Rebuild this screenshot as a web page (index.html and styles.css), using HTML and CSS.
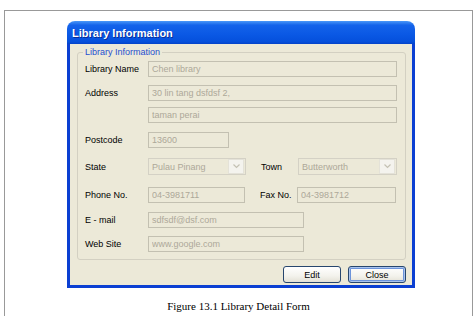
FILE: index.html
```html
<!DOCTYPE html>
<html lang="en">
  <head>
    <meta charset="UTF-8" />
    <title>Library Detail Form</title>
    <link rel="stylesheet" href="styles.css">
  </head>
  <body>
    <div class="figure">
      <div class="window">
        <div class="title-bar">Library Information</div>
        <div class="window-body">
          <fieldset class="group">
            <legend>Library Information</legend>

            <div class="form-row row-name">
              <label>Library Name</label>
              <input type="text" class="field w-full" value="Chen library" disabled />
            </div>

            <div class="form-row row-addr1">
              <label>Address</label>
              <input type="text" class="field w-full" value="30 lin tang dsfdsf 2," disabled />
            </div>

            <div class="form-row row-addr2">
              <label></label>
              <input type="text" class="field w-full" value="taman perai" disabled />
            </div>

            <div class="form-row row-post">
              <label>Postcode</label>
              <input type="text" class="field w-post" value="13600" disabled />
            </div>

            <div class="form-row row-state">
              <label>State</label>
              <div class="combo w-state">
                <span class="combo-text">Pulau Pinang</span>
                <span class="combo-btn">
                  <svg width="7" height="5" viewBox="0 0 7 5"><path d="M0.5 0.5 L3.5 3.5 L6.5 0.5" fill="none" stroke="#c4c1b3" stroke-width="1.2"/></svg>
                </span>
              </div>
              <label class="label-right">Town</label>
              <div class="combo w-right">
                <span class="combo-text">Butterworth</span>
                <span class="combo-btn">
                  <svg width="7" height="5" viewBox="0 0 7 5"><path d="M0.5 0.5 L3.5 3.5 L6.5 0.5" fill="none" stroke="#c4c1b3" stroke-width="1.2"/></svg>
                </span>
              </div>
            </div>

            <div class="form-row row-phone">
              <label>Phone No.</label>
              <input type="text" class="field w-phone" value="04-3981711" disabled />
              <label class="label-right">Fax No.</label>
              <input type="text" class="field w-right" value="04-3981712" disabled />
            </div>

            <div class="form-row row-mail">
              <label>E - mail</label>
              <input type="text" class="field w-mail" value="sdfsdf@dsf.com" disabled />
            </div>

            <div class="form-row row-web">
              <label>Web Site</label>
              <input type="text" class="field w-mail" value="www.google.com" disabled />
            </div>
          </fieldset>

          <div class="button-row">
            <button type="button">Edit</button>
            <button type="button" class="default">Close</button>
          </div>
        </div>
      </div>
      <p class="caption">Figure 13.1 Library Detail Form</p>
    </div>
  </body>
</html>
```

FILE: styles.css
```css
body {
  margin: 0;
  background: #fff;
  font-family: "Liberation Sans", Arial, sans-serif;
  font-size: 9px;
}
.figure {
  margin: 10px 1px 0 4px;
  height: 306px;
  box-sizing: border-box;
  border: 1px solid #999;
  border-bottom: none;
}
.window {
  width: 348px;
  margin: 10px 0 0 62px;
}
.title-bar {
  height: 23px;
  line-height: 24px;
  padding-left: 5px;
  border-radius: 8px 8px 0 0;
  background: linear-gradient(#4a98f8 0, #1463ea 18%, #0a58e4 60%, #0550dc 90%, #0342c8 100%);
  color: #fff;
  font-size: 11px;
  font-weight: bold;
  text-shadow: 1px 1px 0 #0a2f9a;
}
.window-body {
  height: 244px;
  box-sizing: border-box;
  padding: 3px 6px 3px 7px;
  background: #ece9d8;
  border: 3px solid #0b3fd2;
  border-top: none;
}
.group {
  margin: 0;
  padding: 4px 0 7px 7px;
  border: 1px solid #d3d0c2;
  border-radius: 3px;
  min-inline-size: 0;
}
.group legend {
  margin-left: -2px;
  padding: 0 2px;
  line-height: 10px;
  color: #1f4fd0;
}
.form-row {
  display: flex;
  align-items: center;
  height: 16px;
}
.form-row label {
  width: 63px;
  color: #000;
  flex-shrink: 0;
}
.form-row .label-right {
  width: 37px;
  margin-left: 15px;
}
.row-addr1 { margin-top: 8px; }
.row-addr2 { margin-top: 6px; }
.row-post { margin-top: 9px; }
.row-state { margin-top: 10px; height: 17px; }
.row-phone { margin-top: 12px; }
.row-mail { margin-top: 9px; }
.row-web { margin-top: 8px; }

.field {
  height: 16px;
  box-sizing: border-box;
  margin: 0;
  padding: 0 3px;
  border: 1px solid #c3c0b1;
  background: #ece9d8;
  color: #aca899;
  font-family: inherit;
  font-size: 9px;
}
.w-full { width: 249px; }
.w-post { width: 81px; }
.w-state { width: 98px; }
.w-phone { width: 97px; }
.w-right { width: 99px; }
.w-mail { width: 156px; }

.combo {
  display: flex;
  align-items: center;
  height: 17px;
  box-sizing: border-box;
  border: 1px solid #d4d1c5;
  background: #ece9d8;
  color: #aca899;
}
.combo-text {
  flex: 1;
  padding-left: 3px;
}
.combo-btn {
  display: flex;
  align-items: center;
  justify-content: center;
  width: 14px;
  height: 13px;
  margin-right: 1px;
  border: 1px solid #e4e2d8;
  background: #f4f3ee;
}
.button-row {
  display: flex;
  justify-content: flex-end;
  gap: 7px;
  margin-top: 6px;
}
.button-row button {
  width: 58px;
  height: 17px;
  padding: 0;
  border: 1px solid #27466e;
  border-radius: 3px;
  background: linear-gradient(#ffffff, #f3f2ec 60%, #e4e1d6);
  color: #000;
  font-family: inherit;
  font-size: 9px;
}
.button-row button.default {
  box-shadow: inset 0 0 0 1px #aac4ee, inset 0 0 0 2px #6d94da;
}
.caption {
  margin: 12px 0 0;
  text-align: center;
  font-family: "Liberation Serif", "Times New Roman", serif;
  font-size: 11px;
}
```
